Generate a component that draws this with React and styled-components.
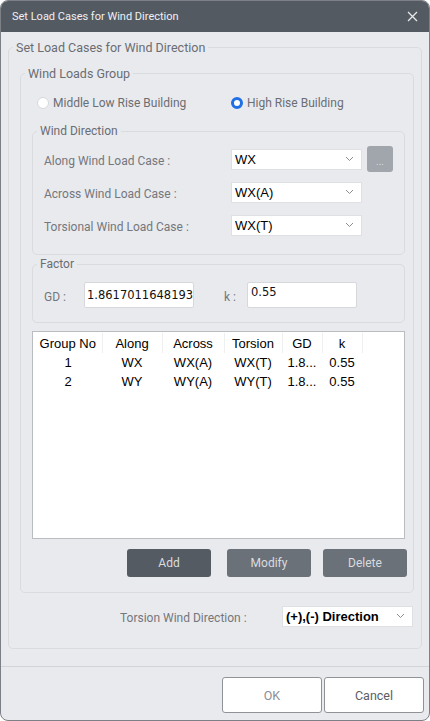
import React from "react";
import styled, { createGlobalStyle } from "styled-components";

const Global = createGlobalStyle`
  html, body { margin: 0; padding: 0; background: #ffffff; }
  * { box-sizing: border-box; }
`;

const UI = `Roboto, "Noto Sans", "Noto Sans CJK KR", sans-serif`;
const DATA = `"Liberation Sans", Arial, sans-serif`;

const Window = styled.div`
  width: 430px;
  height: 721px;
  background: #e9eaee;
  border: 1px solid #7d8187;
  border-radius: 8px;
  overflow: hidden;
  display: flex;
  flex-direction: column;
  font-family: ${UI};
`;

const TitleBar = styled.div`
  height: 31px;
  flex: none;
  background: #545a62;
  display: flex;
  align-items: center;
  justify-content: space-between;
  padding: 0 6px 0 11px;
  color: #eef0f2;
  font-size: 11px;
`;

const CloseBtn = styled.button`
  border: none;
  background: transparent;
  width: 22px;
  height: 22px;
  padding: 0;
  display: flex;
  align-items: center;
  justify-content: center;
  cursor: pointer;
`;

const Body = styled.div`
  flex: 1;
  display: flex;
  flex-direction: column;
  padding: 15px 7px 0 7px;
`;

const Group = styled.div`
  border: 1px solid #d9dbdf;
  border-radius: 5px;
  display: flex;
  flex-direction: column;
  padding: ${(p) => p.$pad || "0 8px 0 11px"};
  margin-top: ${(p) => p.$mt || "0px"};
  height: ${(p) => p.$h || "auto"};
  flex: none;
`;

const Legend = styled.div`
  align-self: flex-start;
  margin: -9px 0 0 -7px;
  padding: 0 3px;
  background: #e9eaee;
  color: #6a6d72;
  font-size: ${(p) => p.$fs || "12px"};
  line-height: 17px;
  white-space: nowrap;
`;

const RadioRow = styled.div`
  display: flex;
  align-items: center;
  height: 20px;
  margin: 11px 0 0 5px;
`;

const RadioItem = styled.label`
  display: flex;
  align-items: center;
  gap: 4px;
  width: ${(p) => p.$w || "auto"};
  color: #6b6e73;
  font-size: 12px;
`;

const RadioDot = styled.span`
  width: 12px;
  height: 12px;
  border-radius: 50%;
  flex: none;
  background: #ffffff;
  border: ${(p) => (p.$on ? "3px solid #1f6fe5" : "1px solid #d6d8dc")};
`;

const FieldRow = styled.div`
  display: flex;
  align-items: center;
  justify-content: ${(p) => p.$justify || "flex-start"};
  height: ${(p) => p.$h || "22px"};
  margin-top: ${(p) => p.$mt || "0px"};
  margin-right: ${(p) => p.$mr || "0px"};
`;

const Label = styled.div`
  width: ${(p) => p.$w || "auto"};
  flex: none;
  color: #74777c;
  font-size: 12px;
  padding-top: 3px;
  padding-right: ${(p) => p.$pr || "0px"};
  text-align: ${(p) => p.$align || "left"};
  white-space: nowrap;
`;

const Select = styled.div`
  width: ${(p) => p.$w || "131px"};
  height: ${(p) => p.$h || "21px"};
  flex: none;
  background: #ffffff;
  border: 1px solid #dfe0e3;
  display: flex;
  align-items: center;
  justify-content: space-between;
  padding: 0 7px 0 3px;
  font-family: ${DATA};
  font-size: 13px;
  font-weight: ${(p) => (p.$bold ? 700 : 400)};
  color: #000;
`;

const Chevron = () => (
  <svg width="9" height="6" viewBox="0 0 9 6">
    <path d="M1 1 L4.5 4.5 L8 1" fill="none" stroke="#8a8d92" strokeWidth="1" />
  </svg>
);

const DotsBtn = styled.div`
  width: 26px;
  height: 26px;
  margin-left: 5px;
  border-radius: 3px;
  background: #a1a6ad;
  color: #d8dbdf;
  font-size: 10px;
  display: flex;
  align-items: center;
  justify-content: center;
  padding-top: 5px;
`;

const TextInput = styled.div`
  width: 110px;
  height: 26px;
  flex: none;
  background: #ffffff;
  border: 1px solid #d6d8db;
  border-radius: 2px;
  display: flex;
  align-items: ${(p) => (p.$top ? "flex-start" : "center")};
  padding: ${(p) => (p.$top ? "2px 3px 0" : "0 2px")};
  font-family: "DejaVu Sans", sans-serif;
  font-size: 11.5px;
  color: #111;
`;

const TableBox = styled.div`
  height: 208px;
  margin-top: 8px;
  background: #ffffff;
  border: 1px solid #b9bcc1;
  padding: 1px;
  flex: none;
`;

const Table = styled.table`
  border-collapse: collapse;
  table-layout: fixed;
  font-family: ${DATA};
  font-size: 13px;
  color: #000;
`;

const Th = styled.th`
  width: ${(p) => p.$w}px;
  height: 20px;
  font-weight: 400;
  padding: 0;
  text-align: center;
  border-right: 1px solid #efefef;
  white-space: nowrap;
  overflow: hidden;
`;

const Td = styled.td`
  height: 19px;
  padding: 0;
  text-align: center;
  white-space: nowrap;
`;

const ButtonRow = styled.div`
  display: flex;
  justify-content: flex-end;
  margin: ${(p) => p.$m || "0"};
`;

const ActionBtn = styled.button`
  width: 84px;
  height: 28px;
  border: none;
  border-radius: 3px;
  margin-left: ${(p) => p.$ml || "0px"};
  background: ${(p) => (p.$primary ? "#555b63" : "#6b7179")};
  color: #d9dcdf;
  font-family: ${UI};
  font-size: 12px;
  padding: 0;
`;

const DialogBtn = styled.button`
  width: 100px;
  height: 36px;
  border: 1px solid #8f9398;
  border-radius: 3px;
  margin-left: ${(p) => p.$ml || "0px"};
  background: #ffffff;
  color: ${(p) => (p.$dim ? "#8c8f94" : "#5a5d62")};
  font-family: ${UI};
  font-size: 12.5px;
  padding: 0;
`;

const Separator = styled.div`
  height: 1px;
  background: #d2d4d8;
  margin: 17px -7px 0;
`;

const cols = [
  { name: "Group No", w: 68 },
  { name: "Along", w: 60 },
  { name: "Across", w: 62 },
  { name: "Torsion", w: 58 },
  { name: "GD", w: 40 },
  { name: "k", w: 40 },
];

const rows = [
  ["1", "WX", "WX(A)", "WX(T)", "1.8...", "0.55"],
  ["2", "WY", "WY(A)", "WY(T)", "1.8...", "0.55"],
];

export default function App() {
  return (
    <>
      <Global />
      <Window>
        <TitleBar>
          <span>Set Load Cases for Wind Direction</span>
          <CloseBtn aria-label="close">
            <svg width="11" height="11" viewBox="0 0 11 11">
              <path d="M1 1 L10 10 M10 1 L1 10" stroke="#e8e9eb" strokeWidth="1.3" />
            </svg>
          </CloseBtn>
        </TitleBar>
        <Body>
          <Group $h="602px" $pad="0 7px 0 11px">
            <Legend $fs="12.5px">Set Load Cases for Wind Direction</Legend>
            <Group $mt="17px" $h="520px">
              <Legend $fs="12.5px">Wind Loads Group</Legend>
              <RadioRow>
                <RadioItem $w="194px">
                  <RadioDot />
                  Middle Low Rise Building
                </RadioItem>
                <RadioItem>
                  <RadioDot $on />
                  High Rise Building
                </RadioItem>
              </RadioRow>
              <Group $mt="18px" $h="124px">
                <Legend>Wind Direction</Legend>
                <FieldRow $mt="6px" $h="26px">
                  <Label $w="187px">Along Wind Load Case :</Label>
                  <Select>
                    WX
                    <Chevron />
                  </Select>
                  <DotsBtn>...</DotsBtn>
                </FieldRow>
                <FieldRow $mt="9px">
                  <Label $w="187px">Across Wind Load Case :</Label>
                  <Select>
                    WX(A)
                    <Chevron />
                  </Select>
                </FieldRow>
                <FieldRow $mt="11px">
                  <Label $w="187px">Torsional Wind Load Case :</Label>
                  <Select>
                    WX(T)
                    <Chevron />
                  </Select>
                </FieldRow>
              </Group>
              <Group $mt="9px" $h="59px">
                <Legend>Factor</Legend>
                <FieldRow $mt="9px" $h="26px">
                  <Label $w="40px">GD :</Label>
                  <TextInput>1.8617011648193</TextInput>
                  <Label $w="53px" $align="right" $pr="11px">k :</Label>
                  <TextInput $top>0.55</TextInput>
                </FieldRow>
              </Group>
              <TableBox>
                <Table>
                  <thead>
                    <tr>
                      {cols.map((c) => (
                        <Th key={c.name} $w={c.w}>
                          {c.name}
                        </Th>
                      ))}
                    </tr>
                  </thead>
                  <tbody>
                    {rows.map((r) => (
                      <tr key={r[0]}>
                        {r.map((v, i) => (
                          <Td key={i}>{v}</Td>
                        ))}
                      </tr>
                    ))}
                  </tbody>
                </Table>
              </TableBox>
              <ButtonRow $m="10px -2px 0 0">
                <ActionBtn $primary>Add</ActionBtn>
                <ActionBtn $ml="16px">Modify</ActionBtn>
                <ActionBtn $ml="12px">Delete</ActionBtn>
              </ButtonRow>
            </Group>
            <FieldRow $mt="12px" $justify="flex-end" $mr="1px">
              <Label $w="162px">Torsion Wind Direction :</Label>
              <Select $bold>
                (+),(-) Direction
                <Chevron />
              </Select>
            </FieldRow>
          </Group>
          <Separator />
          <ButtonRow $m="10px -2px 0 0">
            <DialogBtn $dim>OK</DialogBtn>
            <DialogBtn $ml="2px">Cancel</DialogBtn>
          </ButtonRow>
        </Body>
      </Window>
    </>
  );
}
